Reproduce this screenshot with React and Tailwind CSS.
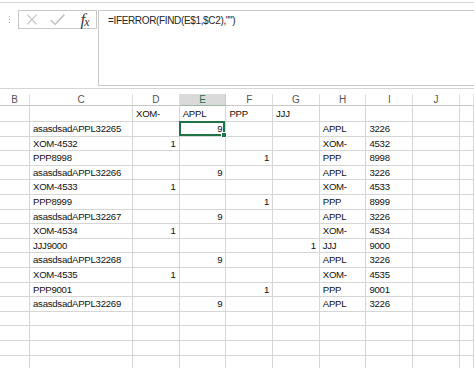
import React from "react";

const rows = [
  ["asasdsadAPPL32265", "", "9", "", "", "APPL", "3226"],
  ["XOM-4532", "1", "", "", "", "XOM-", "4532"],
  ["PPP8998", "", "", "1", "", "PPP", "8998"],
  ["asasdsadAPPL32266", "", "9", "", "", "APPL", "3226"],
  ["XOM-4533", "1", "", "", "", "XOM-", "4533"],
  ["PPP8999", "", "", "1", "", "PPP", "8999"],
  ["asasdsadAPPL32267", "", "9", "", "", "APPL", "3226"],
  ["XOM-4534", "1", "", "", "", "XOM-", "4534"],
  ["JJJ9000", "", "", "", "1", "JJJ", "9000"],
  ["asasdsadAPPL32268", "", "9", "", "", "APPL", "3226"],
  ["XOM-4535", "1", "", "", "", "XOM-", "4535"],
  ["PPP9001", "", "", "1", "", "PPP", "9001"],
  ["asasdsadAPPL32269", "", "9", "", "", "APPL", "3226"],
];

const gridCols = "grid grid-cols-[30px_103px_46.7px_46.7px_46.7px_46.7px_46.7px_46.7px_46.7px_1fr]";
const cellBase = "border-r border-b border-[#d6d6d6] overflow-visible whitespace-nowrap leading-none flex items-center";

function Cell({ children, right, selected }) {
  return (
    <div className={`${cellBase} relative ${right ? "justify-end pr-[3px]" : "pl-[3px]"}`}>
      <span className="relative z-0">{children}</span>
      {selected && (
        <div className="absolute -left-[1px] -top-[1px] right-0 bottom-0 border-2 border-[#217346] z-10">
          <div className="absolute -right-[4px] -bottom-[4px] w-[6px] h-[6px] bg-[#217346] border border-white" />
        </div>
      )}
    </div>
  );
}

function DataRow({ r, idx }) {
  const [c, d, e, f, g, h, i] = r;
  return (
    <div className={`${gridCols} h-[14.6px]`}>
      <Cell />
      <Cell>{c}</Cell>
      <Cell right>{d}</Cell>
      <Cell right selected={idx === 0}>{e}</Cell>
      <Cell right>{f}</Cell>
      <Cell right>{g}</Cell>
      <Cell>{h}</Cell>
      <Cell>{i}</Cell>
      <Cell />
      <Cell />
    </div>
  );
}

export default function App() {
  const headers = ["B", "C", "D", "E", "F", "G", "H", "I", "J", ""];
  return (
    <div
      className="w-[474px] h-[368px] overflow-hidden bg-white text-[#111]"
      style={{ fontFamily: "'Liberation Sans', Arial, sans-serif" }}
    >
      {/* Formula bar */}
      <div className="pt-[2px]">
        <div className="h-[87px] border-t border-b border-[#d6d6d6] flex items-start pt-[7px]">
          <div className="w-[18px] h-[19px] flex flex-col items-center justify-center gap-[2px]">
            <div className="w-[1px] h-[1px] bg-[#a8a8a8]" />
            <div className="w-[1px] h-[1px] bg-[#a8a8a8]" />
            <div className="w-[1px] h-[1px] bg-[#a8a8a8]" />
          </div>
          <div className="w-[79px] h-[19px] border border-[#c8c8c8] flex items-center">
            <svg width="79" height="19" viewBox="0 0 79 19" className="block">
              <path d="M8.5 4.5 L18 14.5 M18 4.5 L8.5 14.5" stroke="#c4c4c4" strokeWidth="1.3" fill="none" />
              <path d="M32.5 10 L37 14.5 L46.5 4.5" stroke="#c4c4c4" strokeWidth="1.5" fill="none" />
            </svg>
          </div>
          <div
            className="relative -ml-[22px] w-[20px] h-[19px] flex items-center justify-center text-[#3c3c3c] italic leading-none"
            style={{ fontFamily: "'Liberation Serif', 'Times New Roman', serif" }}
          >
            <span className="text-[17px]">f</span>
            <span className="text-[12px] mt-[4px] -ml-[1px]">x</span>
          </div>
          <div className="ml-[3px] flex-1 h-[76px] border-l border-t border-b border-[#c8c8c8] pl-[9px] pt-[5px] text-[10px] leading-none">
            <span className="tracking-[-0.35px] text-[#262626]">=IFERROR(FIND(E$1,$C2),"")</span>
          </div>
        </div>
      </div>
      <div className="h-[5px]" />
      {/* Column headers */}
      <div className={`${gridCols} h-[12px] text-[10px] text-[#555]`}>
        {headers.map((hd, k) => (
          <div
            key={k}
            className={`flex items-center justify-center leading-none border-b ${
              hd === "E"
                ? "bg-[#dadada] text-[#217346] border-b-[#9eb9a8] border-r border-r-[#c8c8c8]"
                : "border-r border-[#dedede] border-b-[#c8c8c8]"
            }`}
          >
            {hd}
          </div>
        ))}
      </div>
      {/* Body */}
      <div className="text-[9.6px] tracking-[-0.25px]">
        <div className={`${gridCols} h-[16px]`}>
          <Cell />
          <Cell />
          <Cell>XOM-</Cell>
          <Cell>APPL</Cell>
          <Cell>PPP</Cell>
          <Cell>JJJ</Cell>
          <Cell />
          <Cell />
          <Cell />
          <Cell />
        </div>
        {rows.map((r, idx) => (
          <DataRow key={idx} r={r} idx={idx} />
        ))}
        {[0, 1, 2, 3].map((k) => (
          <DataRow key={"e" + k} r={["", "", "", "", "", "", ""]} idx={-1} />
        ))}
      </div>
    </div>
  );
}
